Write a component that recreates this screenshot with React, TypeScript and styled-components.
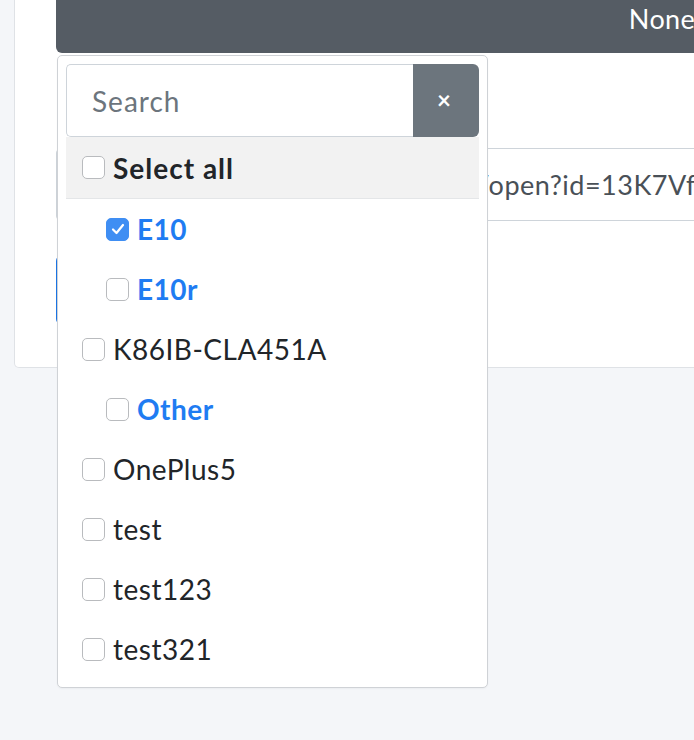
import React, { useState } from 'react';
import styled, { createGlobalStyle } from 'styled-components';

const GlobalStyle = createGlobalStyle`
  html, body {
    margin: 0;
    padding: 0;
    background: #f4f6f9;
    overflow: hidden;
    font-family: Lato, "Open Sans", "Liberation Sans", sans-serif;
    color: #212529;
  }
`;

const Page = styled.div`
  width: 694px;
  height: 740px;
  overflow: hidden;
  padding-left: 14px;
  box-sizing: border-box;
`;

const Card = styled.div`
  position: relative;
  width: 1300px;
  height: 368px;
  box-sizing: border-box;
  background: #fff;
  border: 1px solid #dfe2e6;
  border-top: none;
  border-radius: 0 0 5px 5px;
  padding-left: 41px;
`;

const ToggleBar = styled.div`
  width: 1212px;
  height: 53px;
  background: #555c64;
  border-radius: 0 0 6px 6px;
  color: #fff;
  font-size: 27px;
  letter-spacing: 0.4px;
  display: flex;
  align-items: center;
  justify-content: center;
  padding-bottom: 16px;
  box-sizing: border-box;
`;

const UrlField = styled.div`
  margin-top: 95px;
  height: 73px;
  box-sizing: border-box;
  border: 1px solid #ced4da;
  border-radius: 5px;
  display: flex;
  align-items: center;
  padding-left: 122px;
  font-size: 27px;
  letter-spacing: 0.5px;
  color: #495057;
  white-space: nowrap;
`;

const SaveButton = styled.div`
  margin-top: 34px;
  width: 300px;
  height: 70px;
  background: #1b74e4;
  border-radius: 6px;
`;

const Dropdown = styled.div`
  position: absolute;
  top: 55px;
  left: 42px;
  width: 431px;
  box-sizing: border-box;
  background: #fff;
  border: 1px solid #cfd2d6;
  border-radius: 5px;
  padding: 8px;
  box-shadow: 0 1px 2px rgba(0, 0, 0, 0.04);
`;

const SearchRow = styled.div`
  display: flex;
  height: 73px;
`;

const SearchInput = styled.input`
  flex: 1;
  min-width: 0;
  box-sizing: border-box;
  border: 1px solid #ced4da;
  border-right: none;
  border-radius: 5px 0 0 5px;
  padding: 0 0 0 25px;
  font-family: inherit;
  font-size: 28px;
  letter-spacing: 1px;
  color: #495057;
  outline: none;
  &::placeholder {
    color: #6c757d;
  }
`;

const ClearButton = styled.button`
  width: 66px;
  border: none;
  background: #6c757d;
  border-radius: 0 6px 6px 0;
  color: #fff;
  font-family: inherit;
  font-size: 24px;
  font-weight: 700;
  line-height: 1;
  padding: 0 4px 2px 0;
`;

const OptionRow = styled.label<{ $head?: boolean; $indent?: boolean }>`
  display: flex;
  align-items: center;
  height: ${(p) => (p.$head ? '62px' : '60px')};
  box-sizing: border-box;
  padding-left: ${(p) => (p.$indent ? '40px' : '16px')};
  background: ${(p) => (p.$head ? '#f2f2f2' : 'transparent')};
  border-bottom: ${(p) => (p.$head ? '1px solid #e4e6e8' : 'none')};
  gap: 8px;
  cursor: pointer;
`;

const Box = styled.span<{ $checked?: boolean }>`
  width: 23px;
  height: 23px;
  box-sizing: border-box;
  border-radius: 5px;
  border: 1px solid ${(p) => (p.$checked ? '#3f8ef3' : '#b9bbbe')};
  background: ${(p) => (p.$checked ? '#3f8ef3' : '#fff')};
  display: flex;
  align-items: center;
  justify-content: center;
  flex-shrink: 0;
`;

const OptionText = styled.span<{ $group?: boolean; $bold?: boolean }>`
  font-size: 28px;
  letter-spacing: ${(p) => (p.$bold ? '1px' : '0.5px')};
  font-weight: ${(p) => (p.$bold || p.$group ? 700 : 400)};
  color: ${(p) => (p.$group ? '#1f7cf2' : '#212529')};
  line-height: 1;
`;

type Option = { label: string; indent?: boolean; group?: boolean };

const options: Option[] = [
  { label: 'E10', indent: true, group: true },
  { label: 'E10r', indent: true, group: true },
  { label: 'K86IB-CLA451A' },
  { label: 'Other', indent: true, group: true },
  { label: 'OnePlus5' },
  { label: 'test' },
  { label: 'test123' },
  { label: 'test321' },
];

function Check({ checked }: { checked: boolean }) {
  return (
    <Box $checked={checked}>
      {checked && (
        <svg width="14" height="12" viewBox="0 0 14 12">
          <path d="M2 6.5 L5.5 10 L12 2" fill="none" stroke="#fff" strokeWidth="2.2" strokeLinecap="round" strokeLinejoin="round" />
        </svg>
      )}
    </Box>
  );
}

export default function App() {
  const [selected, setSelected] = useState<string[]>(['E10']);
  const [query, setQuery] = useState('');

  const toggle = (label: string) =>
    setSelected((s) => (s.includes(label) ? s.filter((x) => x !== label) : [...s, label]));

  return (
    <Page>
      <GlobalStyle />
      <Card>
        <ToggleBar>None</ToggleBar>
        <UrlField>https://drive.google.com/open?id=13K7VfQx9RtY2mLp</UrlField>
        <SaveButton />

        <Dropdown>
          <SearchRow>
            <SearchInput placeholder="Search" value={query} onChange={(e) => setQuery(e.target.value)} />
            <ClearButton onClick={() => setQuery('')}>×</ClearButton>
          </SearchRow>
          <OptionRow $head onClick={() => setSelected(selected.length === options.length ? [] : options.map((o) => o.label))}>
            <Check checked={selected.length === options.length} />
            <OptionText $bold>Select all</OptionText>
          </OptionRow>
          {options.map((o) => (
            <OptionRow key={o.label} $indent={o.indent} onClick={() => toggle(o.label)}>
              <Check checked={selected.includes(o.label)} />
              <OptionText $group={o.group}>{o.label}</OptionText>
            </OptionRow>
          ))}
        </Dropdown>
      </Card>
    </Page>
  );
}
